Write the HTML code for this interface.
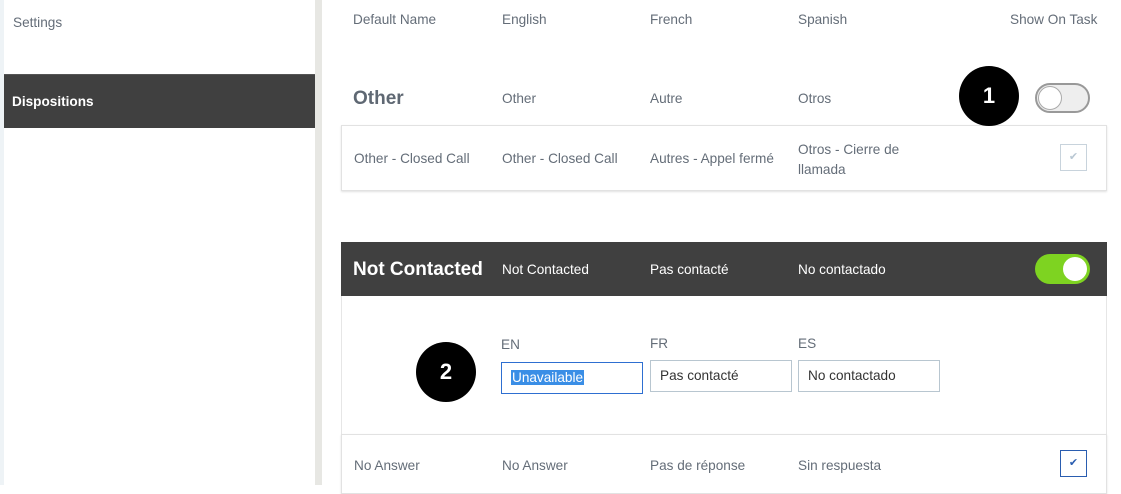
<!DOCTYPE html>
<html><head><meta charset="utf-8"><style>
*{margin:0;padding:0;box-sizing:border-box}
body{width:1121px;height:485px;overflow:hidden;background:#fff;font-family:"Liberation Sans",sans-serif;font-size:13.6px;color:#646d78;position:relative}
.a{position:absolute;white-space:nowrap}
.card{position:absolute;background:#fff;border:1px solid #e2e2e2;box-shadow:0 1px 2px rgba(0,0,0,.12)}
.cb{position:absolute;width:27px;height:27px;border:1px solid #c8d3dc;background:#fff}
.circ{position:absolute;width:60px;height:60px;border-radius:50%;background:#000;color:#fff;font-size:22px;font-weight:bold;text-align:center;line-height:60px;z-index:5}
.inp{position:absolute;height:32px;border:1px solid #b8c6d0;background:#fff;padding-left:9px;line-height:30px;color:#333;font-size:13.6px}
</style></head><body>
<div class="a" style="left:0;top:0;width:4px;height:485px;background:#eef3f6"></div>
<div class="a" style="left:315px;top:0;width:7px;height:485px;background:#e7e7e3"></div>
<div class="a" style="left:13px;top:15px">Settings</div>
<div class="a" style="left:4px;top:74px;width:311px;height:54px;background:#404040;border-top:1px solid #555"></div>
<div class="a" style="left:12px;top:94px;color:#fff;font-weight:bold">Dispositions</div>

<div class="a" style="left:353px;top:12px">Default Name</div>
<div class="a" style="left:502px;top:12px">English</div>
<div class="a" style="left:650px;top:12px">French</div>
<div class="a" style="left:798px;top:12px">Spanish</div>
<div class="a" style="left:1010px;top:12px">Show On Task</div>

<div class="a" style="left:353px;top:88px;font-size:19px;font-weight:bold;color:#5f6873">Other</div>
<div class="a" style="left:502px;top:91px">Other</div>
<div class="a" style="left:650px;top:91px">Autre</div>
<div class="a" style="left:798px;top:91px">Otros</div>
<div class="a" style="left:1035px;top:83px;width:55px;height:30px;border-radius:15px;background:#eee;border:2px solid #999"></div>
<div class="a" style="left:1038px;top:86px;width:24px;height:24px;border-radius:50%;background:#fff;border:1px solid #aaa"></div>

<div class="card" style="left:341px;top:125px;width:766px;height:66px"></div>
<div class="circ" style="left:959px;top:66px">1</div>
<div class="a" style="left:354px;top:151px">Other - Closed Call</div>
<div class="a" style="left:502px;top:151px">Other - Closed Call</div>
<div class="a" style="left:650px;top:151px">Autres - Appel fermé</div>
<div class="a" style="left:798px;top:140px;line-height:20px">Otros - Cierre de<br>llamada</div>
<div class="cb" style="left:1060px;top:144px;color:#b9c7d3;font-size:11px;text-align:center;line-height:25px">✔</div>

<div class="a" style="left:341px;top:242px;width:766px;height:54px;background:#404040"></div>
<div class="a" style="left:353px;top:259px;font-size:19px;font-weight:bold;color:#fff">Not Contacted</div>
<div class="a" style="left:502px;top:262px;color:#fff">Not Contacted</div>
<div class="a" style="left:650px;top:262px;color:#fff">Pas contacté</div>
<div class="a" style="left:798px;top:262px;color:#fff">No contactado</div>
<div class="a" style="left:1035px;top:254px;width:55px;height:30px;border-radius:15px;background:#7ed321"></div>
<div class="a" style="left:1063px;top:257px;width:24px;height:24px;border-radius:50%;background:#fff"></div>

<div class="a" style="left:341px;top:296px;width:766px;height:140px;border:1px solid #e6e6e6;border-top:none"></div>
<div class="circ" style="left:416px;top:342px">2</div>
<div class="a" style="left:501px;top:337px">EN</div>
<div class="a" style="left:650px;top:336px">FR</div>
<div class="a" style="left:798px;top:336px">ES</div>
<div class="inp" style="left:501px;top:362px;width:142px;border-color:#2e6fd1"><span style="background:#3a8ee6;color:#fff;padding:0 1px">Unavailable</span></div>
<div class="inp" style="left:650px;top:360px;width:142px">Pas contacté</div>
<div class="inp" style="left:798px;top:360px;width:142px">No contactado</div>

<div class="card" style="left:341px;top:434px;width:766px;height:60px"></div>
<div class="a" style="left:354px;top:458px">No Answer</div>
<div class="a" style="left:502px;top:458px">No Answer</div>
<div class="a" style="left:650px;top:458px">Pas de réponse</div>
<div class="a" style="left:798px;top:458px">Sin respuesta</div>
<div class="cb" style="left:1060px;top:450px;border-color:#2a5db0;color:#2a5db0;font-size:11px;text-align:center;line-height:25px">✔</div>
</body></html>
